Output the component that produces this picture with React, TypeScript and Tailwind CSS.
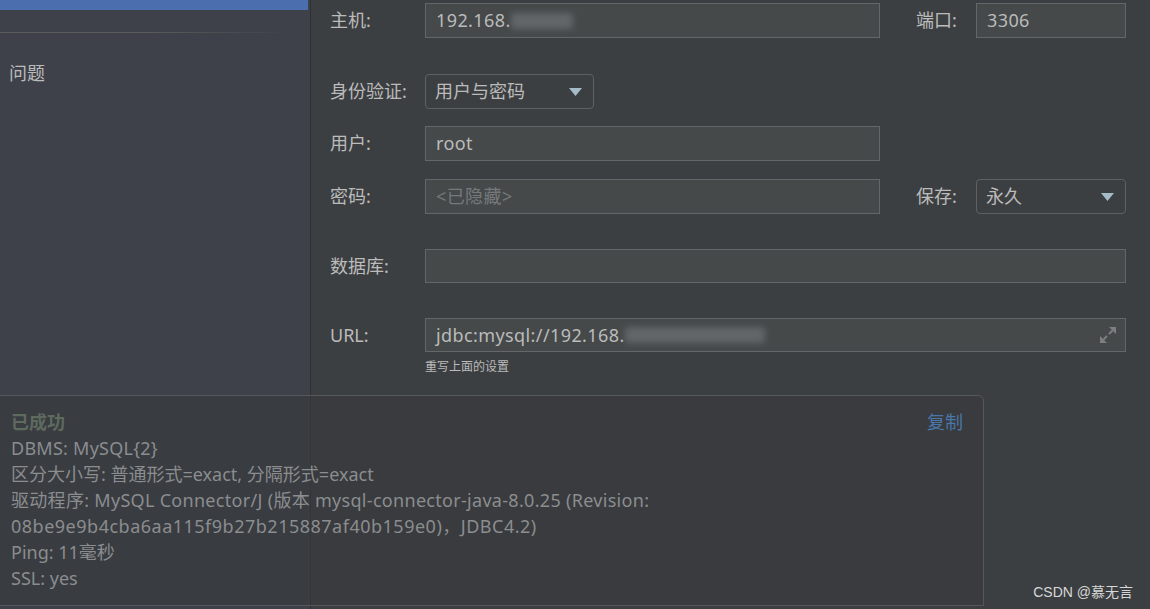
import React from "react";

const font = { fontFamily: '"Noto Sans", "Noto Sans CJK SC", sans-serif' };

function Blur({ w }: { w: number }) {
  return (
    <span className="inline-block align-middle relative h-[16px]" style={{ width: w }}>
      <span className="absolute inset-0 bg-[#6a6d70] blur-[3px] rounded-sm opacity-80" />
    </span>
  );
}

function Caret() {
  return (
    <svg width="13" height="8" viewBox="0 0 13 8" className="shrink-0">
      <polygon points="0,0 13,0 6.5,8" fill="#a3bcc7" />
    </svg>
  );
}

function Expand() {
  return (
    <svg width="18" height="18" viewBox="0 0 18 18">
      <polygon points="10,1 17,1 17,8" fill="#7d7f81" />
      <line x1="13.5" y1="4.5" x2="10" y2="8" stroke="#7d7f81" strokeWidth="2" />
      <polygon points="1,10 1,17 8,17" fill="#7d7f81" />
      <line x1="4.5" y1="13.5" x2="8" y2="10" stroke="#7d7f81" strokeWidth="2" />
    </svg>
  );
}

const inputCls =
  "h-full border border-[#646769] bg-[#45494a] flex items-center pl-[10px] text-[18px] tracking-[0.4px] text-[#bbbbbb]";
const labelCls = "w-[95px] shrink-0 text-[18px] text-[#bbbbbb]";

export default function App() {
  return (
    <div className="relative w-[1150px] h-[609px] overflow-hidden bg-[#3c3f41] flex" style={font}>
      {/* Sidebar */}
      <div className="w-[311px] shrink-0 bg-[#3e414a] border-r border-[#2e3033] flex flex-col">
        <div className="h-[10px] mr-[2px] bg-[#4b6eaf]" />
        <div className="mt-[22px] h-[1px] w-[292px] bg-gradient-to-r from-[#5a5b5a] via-[#5a5b5a] to-transparent" />
        <div className="mt-[30px] pl-[9px] text-[18px] leading-[20px] text-[#bbbbbb]">问题</div>
      </div>

      {/* Main */}
      <div className="flex-1 pl-[19px] pr-[24px] pt-[3px] flex flex-col">
        <div className="flex items-center h-[35px]">
          <div className={labelCls}>主机:</div>
          <div className={`${inputCls} w-[455px]`}>
            <span>192.168.</span>
            <Blur w={62} />
          </div>
          <div className="ml-[36px] w-[60px] text-[18px] text-[#bbbbbb]">端口:</div>
          <div className={`${inputCls} flex-1`}>3306</div>
        </div>

        <div className="flex items-center h-[35px] mt-[36px]">
          <div className={labelCls}>身份验证:</div>
          <div className="h-full w-[169px] border border-[#5e6163] rounded-[4px] flex items-center justify-between pl-[9px] pr-[11px] text-[18px] text-[#bbbbbb]">
            <span>用户与密码</span>
            <Caret />
          </div>
        </div>

        <div className="flex items-center h-[35px] mt-[17px]">
          <div className={labelCls}>用户:</div>
          <div className={`${inputCls} w-[455px]`}>root</div>
        </div>

        <div className="flex items-center h-[35px] mt-[18px]">
          <div className={labelCls}>密码:</div>
          <div className={`${inputCls} w-[455px]`}>
            <span className="text-[#76797b]">&lt;已隐藏&gt;</span>
          </div>
          <div className="ml-[36px] w-[60px] text-[18px] text-[#bbbbbb]">保存:</div>
          <div className="h-full flex-1 border border-[#5e6163] rounded-[4px] flex items-center justify-between pl-[9px] pr-[11px] text-[18px] text-[#bbbbbb]">
            <span>永久</span>
            <Caret />
          </div>
        </div>

        <div className="flex items-center h-[34px] mt-[35px]">
          <div className={labelCls}>数据库:</div>
          <div className={`${inputCls} flex-1`} />
        </div>

        <div className="flex items-center h-[34px] mt-[35px]">
          <div className={labelCls}>URL:</div>
          <div className={`${inputCls} flex-1 pl-[7px] pr-[8px] justify-between`}>
            <span className="flex items-center">
              <span>jdbc:mysql://192.168.</span>
              <Blur w={140} />
            </span>
            <Expand />
          </div>
        </div>

        <div className="mt-[7px] ml-[95px] text-[12px] leading-[16px] text-[#bbbbbb]">重写上面的设置</div>
      </div>

      {/* Popup */}
      <div className="absolute left-[-1px] top-[395px] w-[985px] h-[211px] border border-[#55585b] rounded-tr-[6px] bg-[rgba(55,57,60,0.6)] pt-[13px] pl-[11px] pr-[20px] text-[18px] leading-[26px] text-[#8b8d8f]">
        <div className="flex justify-between">
          <span className="font-semibold text-[#5e6a5e]">已成功</span>
          <span className="text-[#4a77aa]">复制</span>
        </div>
        <div className="tracking-[0.25px]">DBMS: MySQL{"{2}"}</div>
        <div>区分大小写: 普通形式=exact, 分隔形式=exact</div>
        <div className="tracking-[0.3px]">驱动程序: MySQL Connector/J (版本 mysql-connector-java-8.0.25 (Revision:</div>
        <div className="tracking-[0.5px]">08be9e9b4cba6aa115f9b27b215887af40b159e0)，JDBC4.2)</div>
        <div>Ping: 11毫秒</div>
        <div>SSL: yes</div>
      </div>

      {/* Watermark */}
      <div
        className="absolute right-[17px] bottom-[8px] text-[14px] leading-[18px] text-[#d8d8d8]"
        style={{ fontFamily: '"Liberation Sans", "Noto Sans CJK SC", sans-serif' }}
      >
        CSDN @慕无言
      </div>
    </div>
  );
}
